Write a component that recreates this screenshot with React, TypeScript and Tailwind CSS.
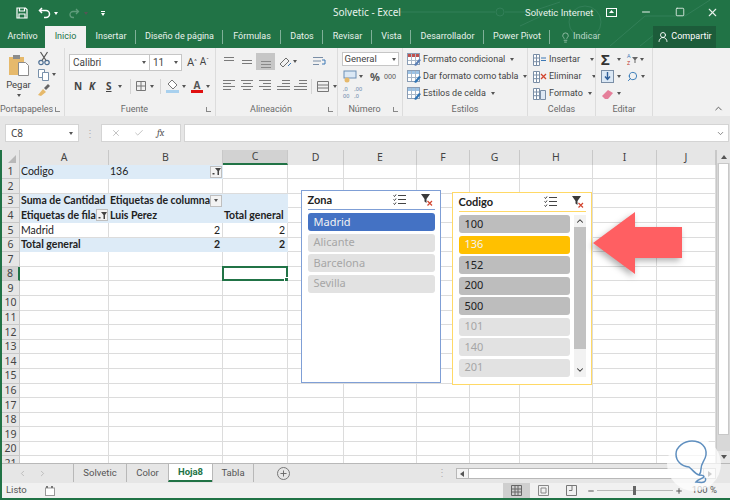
import type { ReactNode } from 'react';
import {
    Check,
    ChevronDown,
    ChevronLeft,
    ChevronRight,
    ChevronUp,
    Lightbulb,
    Minus,
    Plus,
    Search,
    Square,
    UserRound,
    X,
} from 'lucide-react';

const UI_FONT = 'font-["Noto_Sans",sans-serif]';
const SMALL_FONT = 'font-["Roboto",sans-serif]';
const CELL_FONT = 'font-["Lato",sans-serif]';

const tabs = [
    { name: 'Archivo', w: 'w-[45px]' },
    { name: 'Inicio', w: 'w-[41px]', active: true },
    { name: 'Insertar', w: 'w-[50px]', sep: true },
    { name: 'Diseño de página', w: 'w-[87px]', sep: true },
    { name: 'Fórmulas', w: 'w-[58px]', sep: true },
    { name: 'Datos', w: 'w-[42px]', sep: true },
    { name: 'Revisar', w: 'w-[49px]', sep: true },
    { name: 'Vista', w: 'w-[39px]', sep: true },
    { name: 'Desarrollador', w: 'w-[73px]', sep: true },
    { name: 'Power Pivot', w: 'w-[66px]', sep: true },
];

const columns = [
    { name: 'A', w: 'w-[89px]' },
    { name: 'B', w: 'w-[114px]' },
    { name: 'C', w: 'w-[65px]' },
    { name: 'D', w: 'w-[56px]' },
    { name: 'E', w: 'w-[73px]' },
    { name: 'F', w: 'w-[53px]' },
    { name: 'G', w: 'w-[50px]' },
    { name: 'H', w: 'w-[73px]' },
    { name: 'I', w: 'w-[64px]' },
    { name: 'J', w: 'w-[59px]' },
];

type Cell = { text?: string; bold?: boolean; right?: boolean; blue?: boolean; filter?: 'funnel' | 'caret' };

const cells: Record<number, Cell[]> = {
    1: [{ text: 'Codigo', blue: true }, { text: '136', blue: true, filter: 'funnel' }],
    3: [
        { text: 'Suma de Cantidad', bold: true, blue: true },
        { text: 'Etiquetas de columna', bold: true, blue: true, filter: 'caret' },
        { blue: true },
    ],
    4: [
        { text: 'Etiquetas de fila', bold: true, blue: true, filter: 'funnel' },
        { text: 'Luis Perez', bold: true, blue: true },
        { text: 'Total general', bold: true, blue: true },
    ],
    5: [{ text: 'Madrid' }, { text: '2', right: true }, { text: '2', right: true }],
    6: [
        { text: 'Total general', bold: true, blue: true },
        { text: '2', bold: true, right: true, blue: true },
        { text: '2', bold: true, right: true, blue: true },
    ],
};

const rows = Array.from({ length: 21 }, (_, i) => i + 1);

function Caret({ className = '' }: { className?: string }) {
    return <span className={`inline-block shrink-0 w-0 h-0 border-x-[2px] border-x-transparent border-t-[3px] border-t-[#555] ${className}`} />;
}

function Lines({ widths, y = 2, active }: { widths: [number, number][]; y?: number; active?: boolean }) {
    return (
        <svg width="14" height="14" viewBox="0 0 14 14" className={active ? 'opacity-80' : ''}>
            {widths.map(([x, w], i) => (
                <rect key={i} x={x} y={y + i * 3} width={w} height="1" fill="#7a7a7a" />
            ))}
        </svg>
    );
}

function StyleIcon({ kind }: { kind: 'cond' | 'table' | 'cell' }) {
    return (
        <svg width="14" height="14" viewBox="0 0 14 14" className="shrink-0">
            <rect x="0.5" y="0.5" width="12" height="11" fill="#fff" stroke="#8a9db5" />
            <rect x="1" y="1" width="11" height="3" fill={kind === 'cond' ? '#c0504d' : '#9cc3e6'} />
            <path d="M4.5 1v10M8.500 1v10M1 7.500h11" stroke="#a9b8c9" />
            <path d="M7 12l5-6 2 1-5 6z" fill={kind === 'cond' ? '#5b7fb5' : '#2f75b5'} />
        </svg>
    );
}

function CellOpIcon({ kind }: { kind: 'ins' | 'del' | 'fmt' }) {
    return (
        <svg width="15" height="14" viewBox="0 0 15 14" className="shrink-0">
            <path d="M1.500 1.500h6v11h-6zM1.500 5h6M1.500 8.700h6M4.500 1.500v11" fill="#fff" stroke="#7a8ea6" />
            {kind === 'ins' && <path d="M9 5h5M9 7.500h5" stroke="#3c78b5" />}
            {kind === 'del' && <path d="M9 4l5 5M14 4l-5 5" stroke="#d2452f" strokeWidth="1.300" />}
            {kind === 'fmt' && <path d="M8.500 3.500h5v9h-5z" fill="#dfe8f3" stroke="#7a8ea6" />}
        </svg>
    );
}

function Group({ w, label, launcher, children }: { w: string; label: string; launcher?: boolean; children: ReactNode }) {
    return (
        <div className={`${w} h-full flex flex-col shrink-0 border-r border-[#dcdcdc]`}>
            <div className="h-[54px] flex flex-col overflow-hidden">{children}</div>
            <div className={`relative h-[14px] text-center text-[9px] leading-[14px] text-[#6a6a6a] ${SMALL_FONT} ${launcher ? 'pr-[11px]' : ''}`}>
                {label}
                {launcher && <span className="absolute right-[4px] top-[5px] w-[5px] h-[5px] border-l border-b border-[#888]" />}
            </div>
        </div>
    );
}

function ListRow({ icon, text, caretGap = 'ml-[3px]' }: { icon: ReactNode; text: string; caretGap?: string }) {
    return (
        <div className={`h-[17px] flex items-center gap-[2px] pl-[4px] text-[9px] text-[#444] whitespace-nowrap ${SMALL_FONT}`}>
            {icon}
            <span>{text}</span>
            <Caret className={caretGap} />
        </div>
    );
}

function Ribbon() {
    return (
        <div className={`h-[68px] bg-[#f1f1f1] flex ${UI_FONT}`}>
            <Group w="w-[65px]" label="Portapapeles" launcher>
                <div className="flex h-full">
                    <div className="w-[37px] flex flex-col items-center pt-[6px]">
                        <svg width="22" height="23" viewBox="0 0 22 23">
                            <rect x="1" y="3" width="15" height="18" fill="#e6b96b" />
                            <rect x="5" y="1" width="7" height="4" fill="#8c8c8c" />
                            <path d="M10.500 8.500h7l3 3v10h-10z" fill="#fff" stroke="#8c8c8c" />
                        </svg>
                        <span className={`text-[9.500px] leading-[13px] text-[#444] mt-[1px] ${SMALL_FONT}`}>Pegar</span>
                        <Caret className="mt-[3px]" />
                    </div>
                    <div className="flex flex-col gap-[2px] pt-[3px]">
                        <svg width="14" height="15" viewBox="0 0 14 15" fill="none" stroke="#4d6f94" strokeWidth="1.200">
                            <circle cx="4" cy="11.500" r="2.200" />
                            <circle cx="10" cy="11.500" r="2.200" />
                            <path d="M5 9.500L10.500 1M9 9.500L3.500 1" stroke="#555" />
                        </svg>
                        <div className="flex items-center gap-[2px]">
                            <svg width="13" height="13" viewBox="0 0 13 13" fill="#fff" stroke="#7890aa">
                                <path d="M1.500 1.500h6v8h-6z" />
                                <path d="M5.500 4.500h6v8h-6z" />
                            </svg>
                            <Caret />
                        </div>
                        <svg width="14" height="14" viewBox="0 0 14 14">
                            <path d="M1 12l5-6 3 3-5 4z" fill="#e6b96b" />
                            <path d="M7 5l4-4 2 2-4 4z" fill="#666" />
                        </svg>
                    </div>
                </div>
            </Group>

            <Group w="w-[151px]" label="Fuente" launcher>
                <div className={`flex items-center h-[26px] pl-[4px] pt-[2px] ${SMALL_FONT}`}>
                    <div className="w-[81px] h-[17px] bg-white border border-[#c6c6c6] flex items-center justify-between px-[3px] text-[10px] text-[#444]">
                        Calibri
                        <Caret />
                    </div>
                    <div className="w-[32px] h-[17px] bg-white border border-l-0 border-[#c6c6c6] flex items-center justify-between px-[3px] text-[10px] text-[#444]">
                        11
                        <Caret />
                    </div>
                    <span className="ml-[5px] text-[11px] leading-none text-[#444]">A<sup className="text-[6px]">^</sup></span>
                    <span className="ml-[3px] text-[10px] leading-none text-[#444]">A<sup className="text-[6px]">ˇ</sup></span>
                </div>
                <div className="flex items-center h-[24px] pl-[9px] text-[10px] text-[#444]">
                    <span className="w-[15px] font-bold">N</span>
                    <span className="w-[17px] font-bold italic">K</span>
                    <span className="w-[12px] font-bold underline">S</span>
                    <Caret className="mr-[8px]" />
                    <span className="h-[15px] border-l border-[#d4d4d4] mr-[4px]" />
                    <svg width="12" height="12" viewBox="0 0 12 12" fill="none" stroke="#777" className="mr-[3px]">
                        <path d="M1.500 1.500h9v9h-9zM6 1.500v9M1.500 6h9" />
                    </svg>
                    <Caret className="mr-[6px]" />
                    <span className="h-[15px] border-l border-[#d4d4d4] mr-[5px]" />
                    <svg width="14" height="14" viewBox="0 0 14 14" className="mr-[2px]">
                        <path d="M6 1l5 5-4 4-5-5z" fill="#fff" stroke="#777" />
                        <rect x="0" y="11" width="13" height="3" fill="#a8d0ee" />
                    </svg>
                    <Caret className="mr-[5px]" />
                    <span className="w-[12px] flex flex-col items-center leading-[10px] font-bold text-[#555]">
                        A
                        <span className="w-[12px] h-[3px] bg-[#e01010]" />
                    </span>
                    <Caret className="ml-[3px]" />
                </div>
            </Group>

            <Group w="w-[122px]" label="Alineación" launcher>
                <div className="flex items-center h-[26px] pl-[4px] pt-[1px]">
                    <span className="w-[18px] flex justify-center"><Lines widths={[[2, 10], [2, 10]]} y={2} /></span>
                    <span className="w-[18px] flex justify-center"><Lines widths={[[2, 10], [2, 10]]} y={5} /></span>
                    <span className="w-[19px] h-[17px] bg-[#c6c6c6] flex justify-center items-center"><Lines widths={[[2, 10], [2, 10], [2, 10]]} y={6} active /></span>
                    <span className="ml-[3px]">
                        <svg width="14" height="14" viewBox="0 0 14 14" fill="none" stroke="#6d6d6d">
                            <path d="M2 9l6-6 3 3-6 6z" />
                            <path d="M10 11l3-3" stroke="#3c78b5" />
                        </svg>
                    </span>
                    <Caret className="ml-[1px]" />
                    <span className="ml-[15px]">
                        <svg width="15" height="14" viewBox="0 0 15 14" fill="none" stroke="#7a8ea6">
                            <path d="M1 2.500h10M1 6h8M1 9.500h6" />
                            <path d="M10 5h3v4h-3" stroke="#3c78b5" />
                        </svg>
                    </span>
                </div>
                <div className="flex items-center h-[24px] pl-[4px]">
                    <span className="w-[18px] flex justify-center"><Lines widths={[[1, 12], [1, 8], [1, 12], [1, 8]]} y={1} /></span>
                    <span className="w-[18px] flex justify-center"><Lines widths={[[1, 12], [3, 8], [1, 12], [3, 8]]} y={1} /></span>
                    <span className="w-[18px] flex justify-center"><Lines widths={[[1, 12], [5, 8], [1, 12], [5, 8]]} y={1} /></span>
                    <span className="w-[17px] flex justify-center"><Lines widths={[[6, 8], [6, 8], [1, 13], [1, 13]]} y={1} /></span>
                    <span className="w-[17px] flex justify-center"><Lines widths={[[6, 8], [6, 8], [1, 13], [1, 13]]} y={1} /></span>
                    <span className="h-[15px] border-l border-[#d4d4d4] ml-[3px] mr-[4px]" />
                    <svg width="14" height="13" viewBox="0 0 14 13" fill="none" stroke="#777">
                        <path d="M1.500 1.500h11v10h-11zM1.500 5h11M1.500 8h11" />
                    </svg>
                    <Caret className="ml-[3px]" />
                </div>
            </Group>

            <Group w="w-[65px]" label="Número" launcher>
                <div className={`flex justify-center pt-[4px] ${SMALL_FONT}`}>
                    <div className="w-[57px] h-[14px] bg-white border border-[#c6c6c6] flex items-center justify-between px-[2px] text-[9.500px] leading-none text-[#444]">
                        General
                        <Caret />
                    </div>
                </div>
                <div className="flex items-center h-[20px] pl-[5px] text-[#555]">
                    <svg width="14" height="13" viewBox="0 0 14 13">
                        <rect x="1" y="1" width="12" height="7" fill="#dbe8f5" stroke="#6d8fb5" />
                        <circle cx="4" cy="10" r="2.500" fill="#e6b96b" />
                    </svg>
                    <Caret className="ml-[2px]" />
                    <span className="ml-[7px] text-[11px] font-bold leading-none">%</span>
                    <span className="ml-[4px] text-[7px] leading-none">000</span>
                </div>
                <div className="flex items-start h-[14px] pl-[5px] gap-[5px] text-[5.500px] leading-[7px] text-[#5a7ea6]">
                    <span>,0<br />00</span>
                    <span>,00<br />,0</span>
                </div>
            </Group>

            <Group w="w-[125px]" label="Estilos">
                <div className="pt-[3px]">
                    <ListRow icon={<StyleIcon kind="cond" />} text="Formato condicional" />
                    <ListRow icon={<StyleIcon kind="table" />} text="Dar formato como tabla" />
                    <ListRow icon={<StyleIcon kind="cell" />} text="Estilos de celda" />
                </div>
            </Group>

            <Group w="w-[68px]" label="Celdas">
                <div className="pt-[3px]">
                    <ListRow icon={<CellOpIcon kind="ins" />} text="Insertar" caretGap="ml-[8px]" />
                    <ListRow icon={<CellOpIcon kind="del" />} text="Eliminar" caretGap="ml-[8px]" />
                    <ListRow icon={<CellOpIcon kind="fmt" />} text="Formato" />
                </div>
            </Group>

            <Group w="w-[57px]" label="Editar">
                <div className="flex flex-col pt-[3px] pl-[5px]">
                    <div className="h-[17px] flex items-center">
                        <span className="w-[13px] text-[15px] font-bold leading-none text-[#333]">Σ</span>
                        <Caret className="ml-[3px]" />
                        <span className="ml-[6px] flex flex-col text-[5.500px] leading-[7px] text-[#3c78b5]">
                            <span>A</span>
                            <span className="text-[#c0392b]">Z</span>
                        </span>
                        <svg width="6" height="6" viewBox="0 0 6 6" className="ml-[1px]"><path d="M0 0h6L3.500 3v3h-1V3z" fill="#666" /></svg>
                        <Caret className="ml-[2px]" />
                    </div>
                    <div className="h-[17px] flex items-center">
                        <svg width="13" height="13" viewBox="0 0 13 13">
                            <rect x="0.500" y="0.500" width="12" height="12" fill="#dbe8f5" stroke="#7a8ea6" />
                            <path d="M6.500 2v7M4 6.500l2.500 3 2.500-3" fill="none" stroke="#2f5f9a" strokeWidth="1.400" />
                        </svg>
                        <Caret className="ml-[3px]" />
                        <Search size={11} strokeWidth={2} className="ml-[6px] text-[#2f75b5] -scale-x-100" />
                        <Caret className="ml-[3px]" />
                    </div>
                    <div className="h-[17px] flex items-center">
                        <svg width="13" height="12" viewBox="0 0 13 12"><path d="M1 8l6-6 5 3-5 6H4z" fill="#e57f9a" /></svg>
                        <Caret className="ml-[3px]" />
                    </div>
                </div>
            </Group>

            <div className="flex-1 relative">
                <ChevronUp size={11} className="absolute right-[6px] bottom-[2px] text-[#555]" />
            </div>
        </div>
    );
}

function TitleBar() {
    return (
        <div className={`relative h-[26px] flex items-center text-[#e8f2ec] text-[10px] ${UI_FONT}`}>
            <div className="flex items-center pl-[16px] gap-[6px]">
                <svg width="12" height="12" viewBox="0 0 12 12" fill="none" stroke="#fff" strokeWidth="1.200">
                    <path d="M1 1h8.500L11 2.500V11H1zM3.500 1v3h5V1M3 11V7h6v4" />
                </svg>
                <svg width="13" height="12" viewBox="0 0 13 12" fill="none" stroke="#fff" strokeWidth="1.500" className="ml-[4px]">
                    <path d="M4 1L1.500 3.500 4 6M2 3.500h6a3 3 0 0 1 0 7H6" />
                </svg>
                <Caret className="border-t-white -ml-[3px]" />
                <svg width="12" height="12" viewBox="0 0 12 12" fill="none" stroke="#5f9c7c" strokeWidth="1.300" className="ml-[4px]">
                    <path d="M8 2l2.500 2.500L8 7M10 4.500H5a3 3 0 0 0 0 6h1" />
                </svg>
                <Caret className="border-t-[#5f9c7c] -ml-[2px]" />
                <span className="ml-[7px] flex flex-col items-center gap-[1px]">
                    <span className="w-[4px] h-[1px] bg-white" />
                    <Caret className="border-t-white" />
                </span>
            </div>
            <span className="absolute left-[333px] top-[5px]">Solvetic - Excel</span>
            <span className={`absolute left-[525px] top-[6px] text-[9.500px] ${SMALL_FONT}`}>Solvetic Internet</span>
            <svg width="11" height="9" viewBox="0 0 11 9" className="absolute left-[606px] top-[8px]">
                <rect x="0.500" y="0.500" width="10" height="8" fill="none" stroke="#fff" />
                <path d="M3 5l2.500-3L8 5z" fill="#fff" />
            </svg>
            <Minus size={12} className="absolute left-[640px] top-[6px]" />
            <Square size={10} className="absolute left-[675px] top-[7px]" />
            <X size={13} className="absolute left-[706px] top-[6px]" />
        </div>
    );
}

function TabRow() {
    return (
        <div className={`relative h-[22px] flex items-stretch text-[9px] text-[#e8f2ec] ${SMALL_FONT}`}>
            {tabs.map((t) => (
                <div
                    key={t.name}
                    className={`${t.w} shrink-0 relative flex items-center justify-center whitespace-nowrap ${t.active ? 'bg-[#f1f1f1] text-[#217346]' : ''}`}
                >
                    {t.name}
                    {t.sep && <span className="absolute right-0 top-[4px] bottom-[4px] border-r border-[#7fb098]" />}
                </div>
            ))}
            <div className="flex items-center ml-[10px] gap-[2px] text-[#b9d6c6]">
                <Lightbulb size={11} strokeWidth={1.500} />
                <span>Indicar</span>
            </div>
            <div className="ml-auto mr-[14px] w-[63px] bg-[#1c5c3a] flex items-center justify-center gap-[2px] text-white">
                <UserRound size={12} strokeWidth={1.800} />
                <span>Compartir</span>
            </div>
        </div>
    );
}

function FormulaBar() {
    return (
        <div className={`h-[34px] bg-[#e6e6e6] flex items-center pl-[5px] pr-[1px] text-[10px] text-[#444] ${UI_FONT}`}>
            <div className="w-[74px] h-[18px] bg-white border border-[#d4d4d4] flex items-center justify-between pl-[5px] pr-[5px]">
                C8
                <Caret />
            </div>
            <span className="w-[22px] text-center text-[#b0b0b0] tracking-tighter">⋮</span>
            <div className="w-[80px] h-[18px] bg-white border border-[#d4d4d4] flex items-center pl-[9px] gap-[13px] text-[#b8b8b8]">
                <X size={10} />
                <Check size={10} />
                <span className="italic font-serif text-[#555] text-[10px]">fx</span>
            </div>
            <div className="ml-[3px] flex-1 h-[18px] bg-white border border-[#d4d4d4] flex items-center justify-end pr-[3px]">
                <ChevronDown size={9} className="text-[#666]" />
            </div>
        </div>
    );
}

function CellFilter({ kind }: { kind: 'funnel' | 'caret' }) {
    return (
        <span className="absolute right-0 top-[1px] w-[12px] h-[12px] bg-[#f3f3f3] border border-[#bfbfbf] flex items-center justify-center">
            {kind === 'funnel' ? (
                <svg width="9" height="7" viewBox="0 0 9 7">
                    <path d="M3 0h6L7 3v4H5.500V3z" fill="#444" />
                    <rect x="0.500" y="5" width="2" height="1.500" fill="#444" />
                </svg>
            ) : (
                <Caret />
            )}
        </span>
    );
}

function Sheet() {
    return (
        <div className="relative flex-1 flex min-h-0">
            <div className="flex-1 min-w-0 overflow-hidden bg-white">
                <div className={`h-[14.600px] flex bg-[#e6e6e6] text-[10.500px] leading-none text-[#444] ${UI_FONT}`}>
                    <div className="w-[18px] shrink-0 relative border-r border-[#c8c8c8]">
                        <span className="absolute right-[3px] bottom-[2px] w-0 h-0 border-l-[8px] border-l-transparent border-b-[8px] border-b-[#b8b8b8]" />
                    </div>
                    {columns.map((c) => (
                        <div
                            key={c.name}
                            className={`${c.w} shrink-0 flex items-center justify-center border-r border-[#c8c8c8] ${c.name === 'C' ? 'bg-[#d2d2d2] border-b-2 border-b-[#217346]' : ''}`}
                        >
                            {c.name}
                        </div>
                    ))}
                </div>
                {rows.map((r) => (
                    <div key={r} className="h-[14.600px] flex">
                        <div
                            className={`w-[18px] shrink-0 flex items-center justify-center text-[10.500px] leading-none text-[#444] border-r border-b border-[#c8c8c8] ${UI_FONT} ${r === 8 ? 'bg-[#d2d2d2] border-r-2 border-r-[#217346]' : 'bg-[#e6e6e6]'}`}
                        >
                            {r}
                        </div>
                        {columns.map((c, i) => {
                            const cell = cells[r]?.[i];
                            const selected = r === 8 && c.name === 'C';
                            return (
                                <div
                                    key={c.name}
                                    className={`${c.w} shrink-0 relative flex items-center px-[1px] text-[10.500px] leading-none whitespace-nowrap text-[#222] border-r border-b ${CELL_FONT} ${cell?.blue ? 'bg-[#ddebf7] border-[#ddebf7]' : 'border-[#dcdcdc]'} ${cell?.bold ? 'font-bold' : ''} ${cell?.right ? 'justify-end pr-[2px]' : ''}`}
                                >
                                    {cell?.text}
                                    {cell?.filter && <CellFilter kind={cell.filter} />}
                                    {selected && (
                                        <span className="absolute -left-px -top-px -right-px -bottom-px border-2 border-[#217346]">
                                            <span className="absolute -right-[2px] -bottom-[2px] w-[4px] h-[4px] bg-[#217346] border-l border-t border-white" />
                                        </span>
                                    )}
                                </div>
                            );
                        })}
                    </div>
                ))}
            </div>
            <div className="w-[14px] shrink-0 bg-[#d8d8d8] flex flex-col items-center border-l border-[#c8c8c8]">
                <span className="w-full h-[13px] bg-[#e6e6e6] flex items-center justify-center">
                    <span className="w-0 h-0 border-x-[3px] border-x-transparent border-b-[4px] border-b-[#555]" />
                </span>
                <div className="w-[11px] h-[272px] bg-white border border-[#c8c8c8]" />
                <span className="mt-auto w-full h-[12px] bg-[#e6e6e6] flex items-center justify-center">
                    <Caret className="border-x-[3px] border-t-[4px]" />
                </span>
            </div>
        </div>
    );
}

function SlicerIcons() {
    return (
        <div className="flex items-center gap-[15px]">
            <svg width="13" height="12" viewBox="0 0 13 12" fill="none" stroke="#444">
                <path d="M5 1.500h8M5 5.500h8M5 9.500h8" />
                <path d="M0.500 1.500l1 1 1.500-2M0.500 5.500l1 1 1.500-2M0.500 9.500l1 1 1.500-2" stroke="#333" />
            </svg>
            <svg width="12" height="12" viewBox="0 0 12 12">
                <path d="M0 0h9L5.500 5v4L3.500 7.500V5z" fill="#3a3a3a" />
                <path d="M6.500 7l4.500 4.500M11 7l-4.500 4.500" stroke="#d2452f" strokeWidth="1.200" />
            </svg>
        </div>
    );
}

type SlicerItem = { label: string; tone: 'on' | 'data' | 'empty' };

function Slicer({ title, items, accent, selectedBg, position, scroll }: {
    title: string;
    items: SlicerItem[];
    accent: string;
    selectedBg: string;
    position: string;
    scroll?: boolean;
}) {
    return (
        <div className={`absolute ${position} w-[140px] h-[193px] bg-white border px-[5.500px] ${accent} ${UI_FONT}`}>
            <div className={`h-[19px] flex items-center justify-between border-b pr-[2px] ${accent}`}>
                <span className={`text-[11px] font-bold text-[#222] ${CELL_FONT}`}>{title}</span>
                <SlicerIcons />
            </div>
            <div className="flex gap-[4px] mt-[3px]">
                <div className="flex-1 flex flex-col gap-[2.500px]">
                    {items.map((item) => (
                        <div
                            key={item.label}
                            className={`h-[18px] rounded-[3px] flex items-center pl-[6px] text-[11px] ${item.tone === 'on' ? `${selectedBg} text-[#f3f3f3]` : item.tone === 'data' ? 'bg-[#bdbdbd] text-[#222]' : 'bg-[#e2e2e2] text-[#a6a6a6]'}`}
                        >
                            {item.label}
                        </div>
                    ))}
                </div>
                {scroll && (
                    <div className="w-[12px] h-[162px] flex flex-col items-center bg-[#f2f2f2]">
                        <ChevronUp size={10} strokeWidth={2.500} className="mt-[1px] text-[#333]" />
                        <div className="w-full h-[122px] mt-[1px] bg-[#c2c2c2]" />
                        <ChevronDown size={10} strokeWidth={2.500} className="mt-auto mb-[2px] text-[#333]" />
                    </div>
                )}
            </div>
        </div>
    );
}

function TabBar() {
    const sheets = ['Solvetic', 'Color', 'Hoja8', 'Tabla'];
    return (
        <div className={`h-[20px] bg-[#e6e6e6] flex items-stretch border-t border-[#b8b8b8] text-[9.500px] text-[#555] ${SMALL_FONT}`}>
            <div className="w-[71px] flex items-center gap-[11px] pl-[16px] text-[#b0b0b0]">
                <ChevronLeft size={9} />
                <ChevronRight size={9} />
            </div>
            {sheets.map((s) => (
                <div
                    key={s}
                    className={`relative h-[18px] flex items-center justify-center border-l border-[#b8b8b8] ${s === 'Hoja8' ? 'w-[44px] bg-white font-bold text-[#217346] border-b-2 border-b-[#217346]' : s === 'Solvetic' ? 'w-[53px]' : s === 'Color' ? 'w-[42px]' : 'w-[42px] border-r'}`}
                >
                    {s}
                </div>
            ))}
            <div className="ml-[23px] flex items-center">
                <span className="w-[13px] h-[13px] rounded-full border border-[#777] flex items-center justify-center">
                    <Plus size={9} strokeWidth={2.500} className="text-[#666]" />
                </span>
            </div>
            {/* barra de desplazamiento horizontal */}
            <div className="ml-[147px] flex items-center text-[#b0b0b0] tracking-tighter">⋮</div>
            <div className="ml-[9px] my-[4px] flex-1 mr-[14px] flex justify-between bg-white border border-[#b8b8b8]">
                <span className="w-[12px] flex items-center justify-center border-r border-[#b8b8b8] bg-[#f3f3f3]">
                    <span className="w-0 h-0 border-y-[3px] border-y-transparent border-r-[4px] border-r-[#555]" />
                </span>
                <span className="w-[12px] flex items-center justify-center border-l border-[#b8b8b8] bg-[#f3f3f3]">
                    <span className="w-0 h-0 border-y-[3px] border-y-transparent border-l-[4px] border-l-[#555]" />
                </span>
            </div>
        </div>
    );
}

function StatusBar() {
    return (
        <div className={`h-[15px] bg-[#f1f1f1] flex items-center text-[9.500px] text-[#555] ${SMALL_FONT}`}>
            <span className="ml-[4px]">Listo</span>
            <svg width="10" height="10" viewBox="0 0 10 10" className="ml-[18px]">
                <rect x="0.500" y="2" width="9" height="7.500" fill="#fff" stroke="#999" />
                <rect x="1" y="0" width="2" height="2" fill="#777" />
                <rect x="6" y="0" width="2" height="2" fill="#777" />
            </svg>
            <div className="ml-auto flex items-center h-full">
                <span className="w-[27px] h-full bg-[#cfcfcf] flex items-center justify-center">
                    <svg width="11" height="11" viewBox="0 0 11 11" fill="none" stroke="#666">
                        <path d="M.500.500h10v10H.500zM4 .500v10M7 .500v10M.500 4h10M.500 7h10" />
                    </svg>
                </span>
                <svg width="11" height="11" viewBox="0 0 11 11" fill="none" stroke="#888" className="ml-[8px]">
                    <path d="M.500.500h10v10H.500zM3 3h5v5H3z" />
                </svg>
                <svg width="11" height="11" viewBox="0 0 11 11" fill="none" stroke="#777" className="ml-[17px]">
                    <path d="M.500.500h10v10H.500zM6 .500v5H3" />
                </svg>
                <Minus size={8} strokeWidth={3} className="ml-[10px] text-[#555]" />
                <div className="relative w-[76px] h-[1px] bg-[#b8b8b8] mx-[2px]">
                    <span className="absolute left-[36px] -top-[4px] w-[3px] h-[9px] bg-[#666]" />
                </div>
                <Plus size={8} strokeWidth={3} className="text-[#555]" />
                <span className="ml-[9px] mr-[13px]">100 %</span>
            </div>
        </div>
    );
}

export default function App() {
    return (
        <div className="relative w-[730px] h-[500px] overflow-hidden bg-[#217346] flex flex-col">
            {/* fondo de circuito de la barra de titulo */}
            <svg width="730" height="48" viewBox="0 0 730 48" fill="none" stroke="#3a8560" className="absolute left-0 top-0 opacity-70">
                <path d="M400 12h95M505 12h25l30 -10M520 26l30-14" />
                <circle cx="500" cy="12" r="4" />
                <circle cx="585" cy="22" r="16" />
                <path d="M610 46l35-30h40l25-16M640 46l25-20" />
            </svg>
            <div className="relative">
                <TitleBar />
                <TabRow />
            </div>
            <div className="relative flex-1 min-h-0 flex flex-col ml-[2px] mb-[2px]">
                <div className="-ml-[2px] flex flex-col">
                    <Ribbon />
                    <FormulaBar />
                </div>
                <Sheet />
                <TabBar />
                <StatusBar />
            </div>

            <Slicer
                title="Zona"
                accent="border-[#7f9fd6]"
                selectedBg="bg-[#4472c4]"
                position="left-[301px] top-[190px]"
                items={[
                    { label: 'Madrid', tone: 'on' },
                    { label: 'Alicante', tone: 'empty' },
                    { label: 'Barcelona', tone: 'empty' },
                    { label: 'Sevilla', tone: 'empty' },
                ]}
            />
            <Slicer
                title="Codigo"
                accent="border-[#ffd966]"
                selectedBg="bg-[#ffc000]"
                position="left-[452px] top-[192px]"
                scroll
                items={[
                    { label: '100', tone: 'data' },
                    { label: '136', tone: 'on' },
                    { label: '152', tone: 'data' },
                    { label: '200', tone: 'data' },
                    { label: '500', tone: 'data' },
                    { label: '101', tone: 'empty' },
                    { label: '140', tone: 'empty' },
                    { label: '201', tone: 'empty' },
                ]}
            />

            {/* flecha roja */}
            <svg width="100" height="76" viewBox="0 0 100 76" className="absolute left-[590px] top-[208px] drop-shadow-[-2px_3px_3px_rgba(0,0,0,0.3)]">
                <path d="M3 35L45 4v15h47v31H45v16z" fill="#ff5f62" />
            </svg>

            {/* marca de agua */}
            <div className="absolute left-[667px] top-[437px] w-[54px] h-[54px] rounded-full bg-white/70 flex items-center justify-center">
                <svg width="54" height="54" viewBox="0 0 54 54" fill="none" stroke="#5f8fbf" strokeWidth="1.500">
                    <path d="M25 4c9 0 15 6 14 14-1 6-5 8-5 14 0 2-1 5-2 6-4-1-6-5-10-8-8-1-13-6-13-13S17 4 25 4z" />
                    <path d="M32 38c3 0 5 0 5 2-2 2-6 2-8 5 3 0 6 1 8 0 2-1 2-3 1-4" />
                </svg>
            </div>
        </div>
    );
}
